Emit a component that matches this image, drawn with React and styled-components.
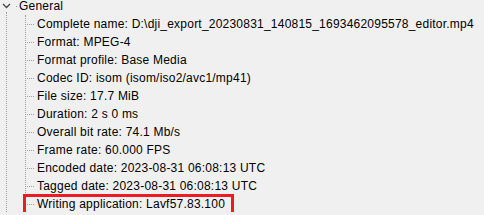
import React from "react";
import styled, { createGlobalStyle } from "styled-components";

const Global = createGlobalStyle`
  html, body { margin: 0; padding: 0; background: #f0f0f0; overflow: hidden; }
  body { font-family: "Liberation Sans", Arial, sans-serif; font-size: 12px; letter-spacing: 0.22px; color: #000; }
`;

const Tree = styled.div`
  position: relative;
  height: 215px;
  overflow: hidden;
  margin-top: -3px;
  &::before {
    content: "";
    position: absolute;
    left: 6px;
    top: 15px;
    bottom: -10px;
    border-left: 1px dotted #a0a0a0;
  }
`;

const NodeRow = styled.div`
  display: flex;
  align-items: center;
  height: 18px;
  line-height: 18px;
  white-space: nowrap;
`;

const Expander = styled.span`
  display: flex;
  align-items: center;
  justify-content: center;
  width: 13px;
  height: 18px;
`;

const Dot = styled.span`
  width: 1px;
  height: 1px;
  background: #a0a0a0;
  margin: 1px 2px 0 3px;
`;

const Children = styled.div`
  margin-left: 25px;
  border-left: 1px dotted #a0a0a0;
`;

const Leaf = styled.div`
  position: relative;
  height: 18px;
  line-height: 18px;
  padding-left: 11px;
  white-space: nowrap;
  &::before {
    content: "";
    position: absolute;
    left: 1px;
    top: 9px;
    width: 7px;
    border-top: 1px dotted #a0a0a0;
  }
`;

const Label = styled.span`
  position: relative;
  &::after {
    content: "";
    display: ${(p) => (p.$marked ? "block" : "none")};
    position: absolute;
    left: -14px;
    right: -9px;
    top: -3px;
    bottom: -4px;
    border: 3px solid #ec1c24;
  }
`;

const items = [
  "Complete name: D:\\dji_export_20230831_140815_1693462095578_editor.mp4",
  "Format: MPEG-4",
  "Format profile: Base Media",
  "Codec ID: isom (isom/iso2/avc1/mp41)",
  "File size: 17.7 MiB",
  "Duration: 2 s 0 ms",
  "Overall bit rate: 74.1 Mb/s",
  "Frame rate: 60.000 FPS",
  "Encoded date: 2023-08-31 06:08:13 UTC",
  "Tagged date: 2023-08-31 06:08:13 UTC",
  "Writing application: Lavf57.83.100",
];

export default function App() {
  return (
    <>
      <Global />
      <Tree>
        <NodeRow>
          <Expander>
            <svg width="9" height="6" viewBox="0 0 9 6">
              <path d="M1 1 L4.5 4.5 L8 1" fill="none" stroke="#444" strokeWidth="1.3" />
            </svg>
          </Expander>
          <Dot />
          <span>General</span>
        </NodeRow>
        <Children>
          {items.map((t, i) => (
            <Leaf key={i}>
              <Label $marked={i === items.length - 1}>{t}</Label>
            </Leaf>
          ))}
        </Children>
      </Tree>
    </>
  );
}
